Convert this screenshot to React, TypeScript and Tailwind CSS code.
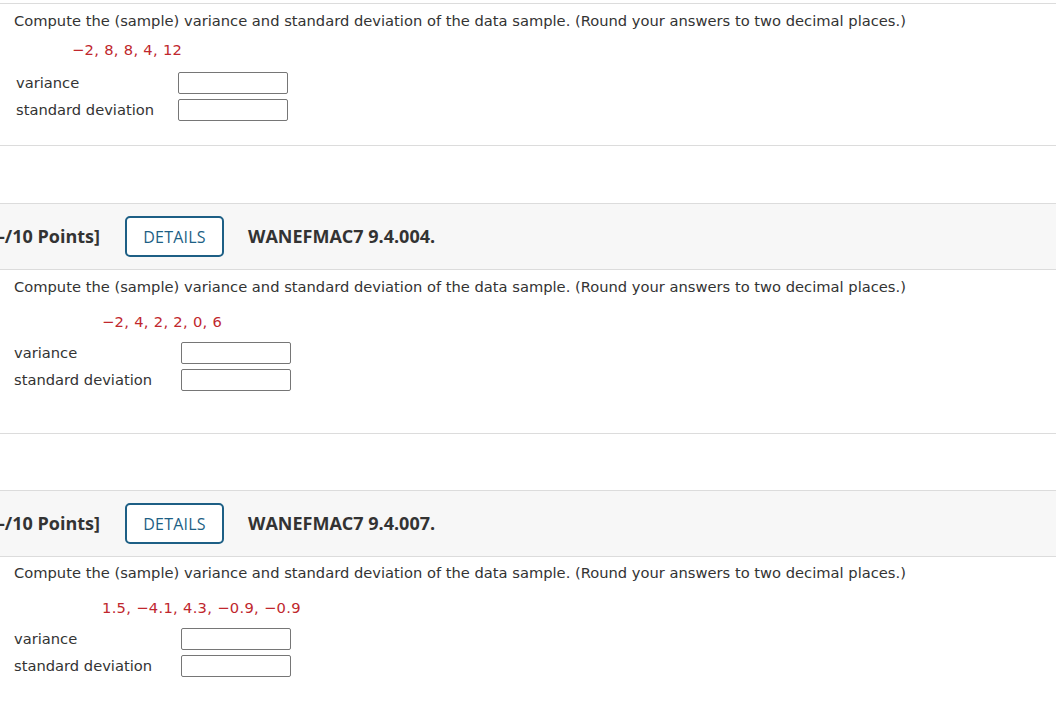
import React from "react"

const body = "font-['Verdana','DejaVu_Sans',sans-serif] text-[#333]"
const head = "font-['Open_Sans',sans-serif] text-[#333]"

function AnswerRow({ label, boxX }: { label: string; boxX: string }) {
  return (
    <div className="flex items-center h-[26px]">
      <span className={`${boxX} shrink-0 text-[14.7px]`}>{label}</span>
      <div className="w-[110px] h-[22px] border border-[#767676] rounded-[2px] bg-white" />
    </div>
  )
}

function Question({
  data,
  dataPad,
  labelPad,
  boxX,
  dataGap,
  rowGap,
}: {
  data: string
  dataPad: string
  labelPad: string
  boxX: string
  dataGap: string
  rowGap: string
}) {
  return (
    <div className={body}>
      <p className="pl-[14px] text-[14.7px] leading-[20px]">
        Compute the (sample) variance and standard deviation of the data sample. (Round your answers to two decimal places.)
      </p>
      <p className={`${dataPad} ${dataGap} text-[14.7px] leading-[20px] text-[#c0272d] tracking-[0.3px]`}>{data}</p>
      <div className={`${labelPad} ${rowGap} flex flex-col gap-[1px]`}>
        <AnswerRow label="variance" boxX={boxX} />
        <AnswerRow label="standard deviation" boxX={boxX} />
      </div>
    </div>
  )
}

function Header({ code }: { code: string }) {
  return (
    <div className={`${head} h-[67px] bg-[#f7f7f7] border-y border-[#dcdcdc] flex items-center`}>
      <span className="-ml-[7px] text-[18px] font-bold w-[132px] shrink-0 whitespace-nowrap">
        [-/10 Points]
      </span>
      <button className="w-[99px] h-[41px] border-2 border-[#1d5f85] rounded-[5px] bg-white text-[#1d5f85] text-[16px] tracking-[0.2px]">
        DETAILS
      </button>
      <span className="ml-[24px] text-[18px] font-bold">{code}</span>
    </div>
  )
}

export default function App() {
  return (
    <div className="w-[1056px] h-[706px] bg-white overflow-hidden">
      <div className="pt-[3px]">
        <div className="border-t border-[#dcdcdc] pt-[7px] pb-[22px]">
          <Question
            data="−2, 8, 8, 4, 12"
            dataPad="pl-[72px]"
            dataGap="mt-[9px]"
            labelPad="pl-[16px]"
            boxX="w-[162px]"
            rowGap="mt-[10px]"
          />
        </div>
        <div className="border-t border-[#dcdcdc] h-[58px]" />
        <Header code="WANEFMAC7 9.4.004." />
        <div className="pt-[7px] pb-[40px]">
          <Question
            data="−2, 4, 2, 2, 0, 6"
            dataPad="pl-[102px]"
            dataGap="mt-[15px]"
            labelPad="pl-[14px]"
            boxX="w-[167px]"
            rowGap="mt-[8px]"
          />
        </div>
        <div className="border-t border-[#dcdcdc] h-[57px]" />
        <Header code="WANEFMAC7 9.4.007." />
        <div className="pt-[6px]">
          <Question
            data="1.5, −4.1, 4.3, −0.9, −0.9"
            dataPad="pl-[102px]"
            dataGap="mt-[15px]"
            labelPad="pl-[14px]"
            boxX="w-[167px]"
            rowGap="mt-[8px]"
          />
        </div>
      </div>
    </div>
  )
}
